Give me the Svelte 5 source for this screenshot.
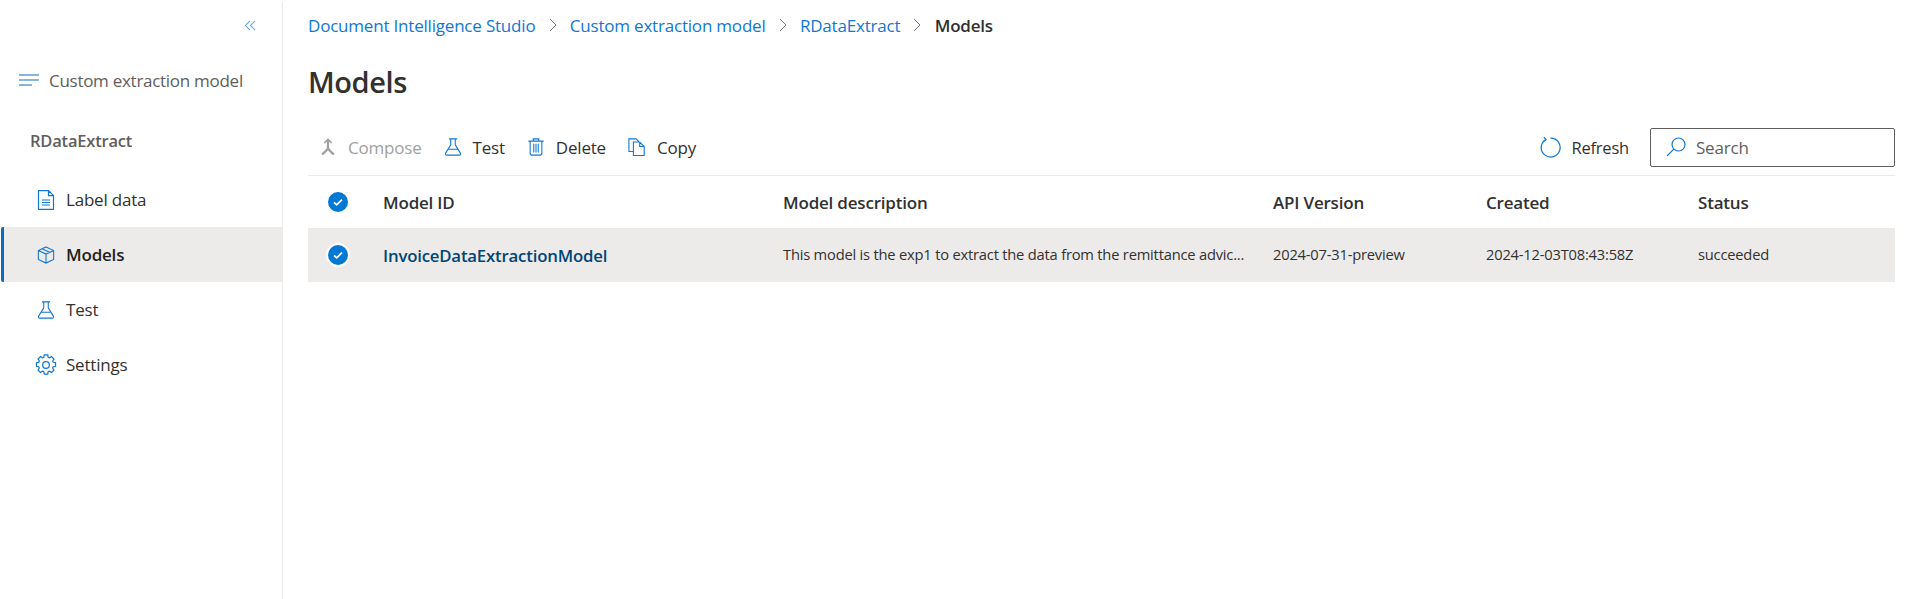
<script lang="ts">
    const navItems = [
        { label: "Label data", icon: "doc" },
        { label: "Models", icon: "box", active: true },
        { label: "Test", icon: "flask" },
        { label: "Settings", icon: "gear" },
    ];

    const crumbs = ["Document Intelligence Studio", "Custom extraction model", "RDataExtract"];

    const gearPath = "M8.2 1.500h3.600l.5 2.400 1.400.6 2.100-1.300 2.500 2.500-1.300 2.100.6 1.400 2.400.5v3.600l-2.400.5-.6 1.400 1.300 2.100-2.500 2.500-2.100-1.300-1.400.6-.5 2.400H8.200l-.5-2.400-1.400-.6-2.100 1.300-2.500-2.500 1.300-2.100-.6-1.400-2.400-.5v-3.600l2.400-.5.6-1.400-1.300-2.100 2.500-2.500 2.100 1.300 1.400-.6z";
</script>

{#snippet flask()}
    <svg class="icon" viewBox="0 0 20 20" fill="none" stroke="currentColor" stroke-width="1.2">
        <path d="M5.500 1h9M7.500 1v6.500L1.800 16.800c-.6 1.100 0 2.200 1.200 2.200h14c1.200 0 1.800-1.100 1.200-2.200L12.500 7.500V1M5 12.500h10" />
    </svg>
{/snippet}

{#snippet check(ring: boolean)}
    <span class="check" class:ring>
        <svg viewBox="0 0 20 20" fill="none" stroke="#fff" stroke-width="1.8">
            <path d="M6 10.300l2.700 2.500L14 7.600" />
        </svg>
    </span>
{/snippet}

<div class="page">
    <aside class="sidebar">
        <div class="collapse">
            <svg viewBox="0 0 14 14" fill="none" stroke="#5a9fe0" stroke-width="1.1">
                <path d="M6.500 2 1.500 7l5 5M12 2 7 7l5 5" />
            </svg>
        </div>
        <div class="project-type">
            <svg viewBox="0 0 21 12" fill="none" stroke="#0f6cbd" stroke-width="1.2">
                <path d="M0 1h20M0 6h20M0 11h13" />
            </svg>
            <span>Custom extraction model</span>
        </div>
        <div class="project-name">RDataExtract</div>
        <nav>
            {#each navItems as item}
                <div class="nav-item" class:active={item.active}>
                    {#if item.icon === "doc"}
                        <svg class="icon" viewBox="0 0 18 20" fill="none" stroke="currentColor" stroke-width="1.2">
                            <path d="M1.500.6h10l5 5v13.800h-15zM11.500.6v5h5M5 10h8M5 12.500h8M5 15h8" />
                        </svg>
                    {:else if item.icon === "box"}
                        <svg class="icon" viewBox="0 0 20 20" fill="none" stroke="currentColor" stroke-width="1.2">
                            <path d="M10 1 18.500 5v10L10 19l-8.500-4V5zM1.500 5 10 9l8.500-4M10 9v10M5.500 3l8.500 4" />
                        </svg>
                    {:else if item.icon === "flask"}
                        {@render flask()}
                    {:else}
                        <svg class="icon gear" viewBox="-1.500 -1.500 23 23" fill="none" stroke="currentColor" stroke-width="1.300">
                            <path d={gearPath} transform="translate(0 -2)" />
                            <circle cx="10" cy="10" r="3.500" />
                        </svg>
                    {/if}
                    <span>{item.label}</span>
                </div>
            {/each}
        </nav>
    </aside>

    <main>
        <div class="breadcrumb">
            {#each crumbs as crumb}
                <span class="crumb">{crumb}</span>
                <svg class="sep" viewBox="0 0 8 14" fill="none" stroke="#7a7774" stroke-width="1">
                    <path d="m1 1 6 6-6 6" />
                </svg>
            {/each}
            <span class="crumb current">Models</span>
        </div>
        <h1>Models</h1>

        <div class="toolbar">
            <div class="btn disabled">
                <svg class="tool-icon" viewBox="0 0 20 20" fill="none" stroke="#a19f9d" stroke-width="2.400">
                    <path d="M10 3v7c0 4-3 4-6.500 8.500M10 10c0 4 3 4 6.500 8.500" />
                    <path d="M6 5.500 10 1.500l4 4" stroke-width="1.700" />
                </svg>
                <span>Compose</span>
            </div>
            <div class="btn">
                <span class="tool-icon blue">{@render flask()}</span>
                <span>Test</span>
            </div>
            <div class="btn">
                <svg class="tool-icon blue" viewBox="0 0 20 20" fill="none" stroke="currentColor" stroke-width="1.200">
                    <path d="M1.500 3.500h17M7 3.500V1h6v2.500M3.500 3.500v14.200l1.300 1.300h10.400l1.300-1.300V3.500M7.500 6.500v9.500M10 6.500v9.500M12.500 6.500v9.500" />
                </svg>
                <span>Delete</span>
            </div>
            <div class="btn">
                <svg class="tool-icon blue" viewBox="0 0 20 20" fill="none" stroke="currentColor" stroke-width="1.200">
                    <path d="M5.500 15H1V1h8l3 3M6 4.500h7l5 5v10H6zM13 4.500v5h5" />
                </svg>
                <span>Copy</span>
            </div>
            <div class="spacer"></div>
            <div class="btn refresh">
                <svg class="refresh-icon blue" viewBox="0 0 20 20" fill="none" stroke="currentColor" stroke-width="1.200">
                    <path d="M5.500 2.800a9 9 0 1 0 4.500-1.300M3.800 0.500l2 2.500-2.500 2" />
                </svg>
                <span>Refresh</span>
            </div>
            <div class="search">
                <svg viewBox="0 0 20 20" fill="none" stroke="#0f78d4" stroke-width="1.200">
                    <circle cx="12.500" cy="7.500" r="6.500" />
                    <path d="M7.800 12.200 1 19" />
                </svg>
                <span>Search</span>
            </div>
        </div>

        <div class="table">
            <div class="row head">
                <div class="cell-check">{@render check(false)}</div>
                <div>Model ID</div>
                <div>Model description</div>
                <div>API Version</div>
                <div>Created</div>
                <div>Status</div>
            </div>
            <div class="row selected">
                <div class="cell-check">{@render check(true)}</div>
                <div class="model-link">InvoiceDataExtractionModel</div>
                <div class="meta desc">This model is the exp1 to extract the data from the remittance advic...</div>
                <div class="meta">2024-07-31-preview</div>
                <div class="meta">2024-12-03T08:43:58Z</div>
                <div class="meta">succeeded</div>
            </div>
        </div>
    </main>
</div>

<style>
    :global(body) {
        margin: 0;
        background: #fff;
    }

    .page {
        display: flex;
        height: 599px;
        overflow: hidden;
        font-family: "Open Sans", "Noto Sans", sans-serif;
        font-size: 17px;
        letter-spacing: -0.2px;
        color: #323130;
    }

    .sidebar {
        width: 282px;
        flex: none;
        margin-top: 2px;
        border-right: 1px solid #edebe9;
        box-sizing: content-box;
    }

    .collapse {
        display: flex;
        justify-content: flex-end;
        padding: 17px 25px 0 0;
        height: 15px;
    }

    .collapse svg {
        width: 13px;
        height: 13px;
    }

    .project-type {
        display: flex;
        align-items: center;
        gap: 9px;
        margin-top: 30px;
        padding-left: 19px;
        height: 32px;
        color: #605e5c;
        letter-spacing: -0.28px;
    }

    .project-type svg {
        width: 21px;
        height: 12px;
    }

    .project-name {
        margin-top: 33px;
        padding-left: 30px;
        font-size: 16.500px;
        font-weight: 600;
        color: #605e5c;
    }

    nav {
        margin-top: 20px;
    }

    .nav-item {
        display: flex;
        align-items: center;
        gap: 11px;
        height: 55px;
        padding-left: 37px;
        box-sizing: border-box;
    }

    .nav-item .icon {
        width: 18px;
        height: 20px;
        color: #0f78d4;
    }

    .nav-item .icon.gear {
        width: 22px;
        height: 22px;
        margin: 0 -2px;
    }

    .nav-item.active {
        background: #edebe9;
        border-left: 3px solid #0f6cbd;
        margin-left: 1px;
        padding-left: 33px;
        font-weight: 600;
        color: #201f1e;
        border-radius: 2px 0 0 2px;
    }

    main {
        flex: 1;
        min-width: 0;
        padding: 0 24px 0 25px;
    }

    .breadcrumb {
        display: flex;
        align-items: center;
        height: 50px;
    }

    .crumb {
        color: #0f78d4;
    }

    .crumb.current {
        color: #323130;
        font-weight: 600;
    }

    .sep {
        width: 8px;
        height: 14px;
        margin: 0 13.200px;
    }

    h1 {
        margin: 13px 0 0;
        font-size: 29px;
        line-height: 38px;
        font-weight: 600;
        letter-spacing: -0.4px;
        color: #323130;
    }

    .toolbar {
        display: flex;
        align-items: center;
        height: 56px;
        margin-top: 18px;
        border-bottom: 1px solid #edebe9;
    }

    .btn {
        display: flex;
        align-items: center;
        gap: 11px;
        margin-left: 11px;
        margin-right: 11px;
    }

    .btn.disabled {
        color: #a19f9d;
    }

    .tool-icon {
        display: block;
        width: 18px;
        height: 20px;
    }

    .tool-icon :global(svg) {
        display: block;
        width: 18px;
        height: 20px;
    }

    .refresh-icon {
        display: block;
        width: 21px;
        height: 22px;
    }

    .blue {
        color: #0f78d4;
    }

    .spacer {
        flex: 1;
    }

    .btn.refresh {
        font-size: 16.500px;
        gap: 10px;
        margin-right: 21px;
    }

    .search {
        display: flex;
        align-items: center;
        gap: 10px;
        width: 245px;
        height: 39px;
        padding-left: 15px;
        box-sizing: border-box;
        border: 1px solid #605e5c;
        border-radius: 2px;
        color: #605e5c;
    }

    .search svg {
        width: 20px;
        height: 20px;
    }

    .row {
        display: grid;
        grid-template-columns: 75px 400px 490px 213px 212px 1fr;
        align-items: center;
    }

    .head {
        height: 52px;
        font-weight: 600;
    }

    .selected {
        height: 54px;
        background: #edebe9;
        font-size: 14.700px;
    }

    .cell-check {
        padding-left: 20px;
    }

    .check {
        display: block;
        width: 20px;
        height: 20px;
        border-radius: 50%;
        background: #0078d4;
    }

    .check.ring {
        box-shadow: 0 0 0 2px #fff;
    }

    .check svg {
        display: block;
    }

    .model-link {
        color: #004578;
        font-size: 16.800px;
        font-weight: 600;
    }

    .meta {
        padding-bottom: 2px;
    }

    .desc {
        padding-right: 24px;
        white-space: nowrap;
    }
</style>
